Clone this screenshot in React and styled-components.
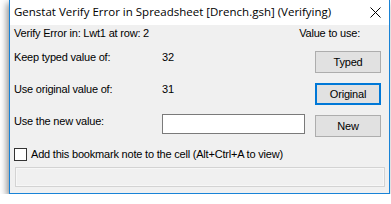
import React from "react";
import styled, { createGlobalStyle } from "styled-components";

const Global = createGlobalStyle`
  html, body { margin: 0; padding: 0; background: #ffffff; }
  body { font-family: "Liberation Sans", Arial, sans-serif; }
`;

const Window = styled.div`
  box-sizing: border-box;
  margin-left: 9px;
  width: 381px;
  height: 194px;
  border: 1px solid #1883d7;
  border-top: 0;
  background: #f0f0f0;
  box-shadow: -2px 3px 7px rgba(0, 0, 0, 0.45);
  display: flex;
  flex-direction: column;
`;

const TitleBar = styled.div`
  height: 25px;
  flex: none;
  background: #ffffff;
  display: flex;
  align-items: center;
  justify-content: space-between;
  padding: 0 8px 0 4px;
  font-family: "Open Sans", "Noto Sans", sans-serif;
  font-size: 11.5px;
  color: #000;
`;

const TitleText = styled.span`
  line-height: 16px;
  padding-bottom: 1px;
`;

const Body = styled.div`
  display: flex;
  flex-direction: column;
  padding: 0 4px;
  font-size: 11px;
  letter-spacing: -0.2px;
  color: #000;
`;

const HeaderRow = styled.div`
  height: 25px;
  box-sizing: border-box;
  padding: 1px 25px 0 0;
  display: flex;
  justify-content: space-between;
  line-height: 14px;
`;

const Grid = styled.div`
  display: grid;
  grid-template-columns: 148px 153px 66px;
  grid-auto-rows: 32px;
  align-items: start;
`;

const Text = styled.span`
  line-height: 14px;
`;

const Button = styled.button`
  box-sizing: border-box;
  margin-top: 1px;
  width: 66px;
  height: 22px;
  padding: 0;
  font: inherit;
  letter-spacing: inherit;
  color: #000;
  background: #e1e1e1;
  border: ${(p) => (p.$default ? "2px solid #0078d7" : "1px solid #adadad")};
  outline: none;
`;

const Input = styled.input`
  box-sizing: border-box;
  width: 143px;
  height: 20px;
  margin: 0;
  border: 1px solid #7a7a7a;
  background: #fff;
  outline: none;
`;

const CheckRow = styled.label`
  margin-top: 1px;
  display: flex;
  align-items: center;
  gap: 4px;
  height: 14px;
  line-height: 14px;
`;

const Box = styled.span`
  box-sizing: border-box;
  width: 13px;
  height: 13px;
  border: 1px solid #333;
  background: #fff;
`;

const StatusBar = styled.div`
  box-sizing: border-box;
  margin: 6px 0 0 1px;
  height: 20px;
  border: 1px solid #d3d3d3;
  box-shadow: inset 0 0 0 1px #f7f7f7;
`;

const CloseIcon = () => (
  <svg width="11" height="11" viewBox="0 0 11 11" aria-hidden="true">
    <path d="M0.5 0.5 L10.5 10.5 M10.5 0.5 L0.5 10.5" stroke="#000" strokeWidth="1" fill="none" />
  </svg>
);

export default function App() {
  return (
    <>
      <Global />
      <Window>
        <TitleBar>
          <TitleText>Genstat Verify Error in Spreadsheet [Drench.gsh] (Verifying)</TitleText>
          <CloseIcon />
        </TitleBar>
        <Body>
          <HeaderRow>
            <Text>Verify Error in: Lwt1 at row: 2</Text>
            <Text>Value to use:</Text>
          </HeaderRow>
          <Grid>
            <Text>Keep typed value of:</Text>
            <Text>32</Text>
            <Button>Typed</Button>
            <Text>Use original value of:</Text>
            <Text>31</Text>
            <Button $default>Original</Button>
            <Text>Use the new value:</Text>
            <Input />
            <Button>New</Button>
          </Grid>
          <CheckRow>
            <Box />
            <Text>Add this bookmark note to the cell (Alt+Ctrl+A to view)</Text>
          </CheckRow>
          <StatusBar />
        </Body>
      </Window>
    </>
  );
}
